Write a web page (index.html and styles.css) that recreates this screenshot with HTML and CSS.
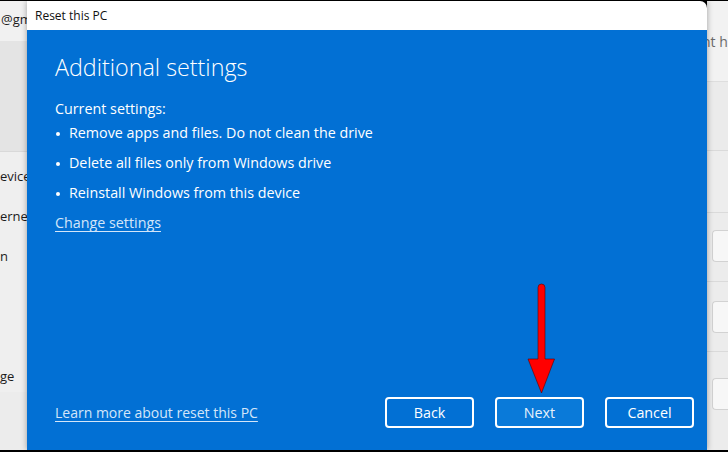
FILE: index.html
```html
<!DOCTYPE html>
<html>
<head>
    <title>Reset this PC</title>
    <link rel="stylesheet" href="styles.css">
</head>
<body>

<div class="screen">
    <!-- Settings window behind, left edge -->
    <div class="side side-left">
        <div class="bg-row row-account"><span>@gm</span></div>
        <div class="bg-row row-blank"></div>
        <div class="bg-row row-item"><span>evice</span></div>
        <div class="bg-row row-item"><span>ernet</span></div>
        <div class="bg-row row-item"><span>n</span></div>
        <div class="bg-row row-gap"></div>
        <div class="bg-row row-item"><span>ge</span></div>
        <div class="bg-row row-rest"></div>
    </div>

    <!-- Reset dialog -->
    <div class="dialog">
        <div class="titlebar">Reset this PC</div>
        <div class="content">
            <h1>Additional settings</h1>
            <p class="label">Current settings:</p>
            <ul class="settings-list">
                <li>Remove apps and files. Do not clean the drive</li>
                <li>Delete all files only from Windows drive</li>
                <li>Reinstall Windows from this device</li>
            </ul>
            <a class="link" href="#">Change settings</a>

            <div class="footer">
                <a class="link" href="#">Learn more about reset this PC</a>
                <div class="buttons">
                    <button type="button">Back</button>
                    <button type="button" class="primary">Next</button>
                    <button type="button">Cancel</button>
                </div>
            </div>
        </div>
    </div>

    <!-- Settings window behind, right edge -->
    <div class="side side-right">
        <div class="bg-row rrow-head"><span>nt h</span></div>
        <div class="bg-row rrow-a"></div>
        <div class="bg-row rrow-b"></div>
        <div class="bg-row rrow-card1"><div class="card"></div></div>
        <div class="bg-row rrow-card2"><div class="card"></div></div>
        <div class="bg-row rrow-card3"><div class="card"></div></div>
    </div>

    <!-- annotation arrow -->
    <svg class="arrow" width="32" height="114" viewBox="0 0 32 114">
        <path d="M13 77 V5.5 A3.5 3.5 0 0 1 20 5.5 V77 H29.5 L16.5 111 L3 77 Z" fill="#ff0000" stroke="#5a0000" stroke-width="0.6"/>
    </svg>
</div>

</body>
</html>
```

FILE: styles.css
```css
/* page frame */
html, body {
    margin: 0;
    padding: 0;
}
body {
    width: 728px;
    height: 452px;
    background: #000;
    font-family: "Open Sans", "Noto Sans", sans-serif;
    overflow: hidden;
}
.screen {
    position: relative;
    display: flex;
    margin-top: 1px;
    height: 449px;
}

/* background window strips */
.side {
    display: flex;
    flex-direction: column;
    overflow: hidden;
    background: #eeeeee;
    font-size: 13px;
    color: #1b1b1b;
}
.side-left {
    width: 27px;
}
.side-right {
    width: 21px;
    color: #6a6a6a;
}
.bg-row {
    flex-shrink: 0;
    white-space: nowrap;
    line-height: 16px;
}
.row-account {
    height: 40px;
    padding-top: 10px;
    box-sizing: border-box;
    background: #f1f1f1;
}
.row-account span {
    margin-left: 1px;
}
.row-blank {
    height: 110px;
    background: #e4e4e4;
    border-bottom: 1px solid #d9d9d9;
}
.row-item {
    height: 40px;
    padding-top: 16px;
    box-sizing: border-box;
    background: #efefef;
}
.row-gap {
    height: 80px;
    background: #efefef;
}
.row-rest {
    flex: 1;
    background: #ececec;
}

.rrow-head {
    height: 81px;
    padding-top: 33px;
    box-sizing: border-box;
    font-size: 14px;
    background: #f2f2f2;
    border-bottom: 1px solid #dedede;
}
.rrow-head span {
    margin-left: -5px;
}
.rrow-a {
    height: 68px;
    background: #ebebeb;
    border-bottom: 1px solid #dadada;
}
.rrow-b {
    height: 61px;
    background: #ededed;
    border-bottom: 1px solid #dadada;
}
.rrow-card1,
.rrow-card2,
.rrow-card3 {
    padding-left: 5px;
    background: #ececec;
    border-bottom: 1px solid #dadada;
}
.rrow-card1 {
    height: 69px;
    padding-top: 17px;
    box-sizing: border-box;
}
.rrow-card2 {
    height: 70px;
    padding-top: 19px;
    box-sizing: border-box;
}
.rrow-card3 {
    flex: 1;
    padding-top: 26px;
    border-bottom: none;
}
.card {
    height: 30px;
    border: 1px solid #d2d2d2;
    border-right: none;
    border-radius: 4px 0 0 4px;
    background: #f7f7f7;
}

/* dialog */
.dialog {
    position: relative;
    z-index: 1;
    width: 680px;
    display: flex;
    flex-direction: column;
    box-shadow: 0 0 6px rgba(0, 0, 0, 0.35);
}
.titlebar {
    height: 29px;
    padding-left: 8px;
    background: #fff;
    border-radius: 0 7px 0 0;
    font-size: 12px;
    line-height: 29px;
    color: #111;
}
.content {
    flex: 1;
    display: flex;
    flex-direction: column;
    align-items: flex-start;
    padding: 0 13px 22px 28px;
    background: #0270d4;
    color: #fff;
    font-size: 14.3px;
}
.content h1 {
    margin: 21px 0 0;
    font-size: 23.3px;
    font-weight: 300;
    line-height: 32px;
}
.label {
    margin: 16px 0 0;
    line-height: 20px;
}
.settings-list {
    margin: -1px 0 0;
    padding: 0;
    list-style: none;
}
.settings-list li {
    position: relative;
    padding-left: 14px;
    line-height: 30px;
}
.settings-list li::before {
    content: "";
    position: absolute;
    left: 1px;
    top: 14px;
    width: 4px;
    height: 4px;
    border-radius: 50%;
    background: #fff;
}
.link {
    color: #d4e6f9;
    text-decoration: underline;
    text-underline-offset: 3px;
    line-height: 20px;
}
.content > .link {
    margin-top: 5px;
}
.footer {
    margin-top: auto;
    align-self: stretch;
    display: flex;
    align-items: center;
    justify-content: space-between;
}
.footer .link {
    font-size: 14px;
}
.buttons {
    display: flex;
    gap: 21px;
}
.buttons button {
    width: 89px;
    height: 31px;
    border: 2px solid #fff;
    border-radius: 4px;
    background: transparent;
    color: #fff;
    font-family: inherit;
    font-size: 14.3px;
    cursor: pointer;
}
.buttons button.primary {
    background: #0a7ad9;
    color: #e8f1fb;
}

/* red annotation arrow */
.arrow {
    position: absolute;
    left: 525px;
    top: 281px;
    z-index: 2;
}
```
